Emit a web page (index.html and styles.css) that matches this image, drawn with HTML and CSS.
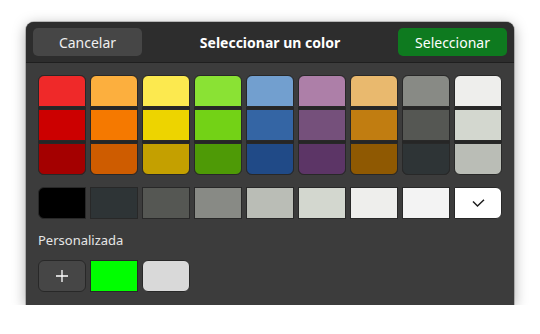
FILE: index.html
```html
<!DOCTYPE html>
<html lang="es">
<head>
<meta charset="utf-8">
<link rel="stylesheet" href="styles.css">
</head>
<body>
<div class="window">
  <header class="header">
    <button class="btn btn-cancel">Cancelar</button>
    <div class="title">Seleccionar un color</div>
    <button class="btn btn-ok">Seleccionar</button>
  </header>
  <main class="content">
    <div class="palette">
      <div class="col"><div class="sw" style="background:#ef2929"></div><div class="sw" style="background:#cc0000"></div><div class="sw" style="background:#a40000"></div></div>
      <div class="col"><div class="sw" style="background:#fcaf3e"></div><div class="sw" style="background:#f57900"></div><div class="sw" style="background:#ce5c00"></div></div>
      <div class="col"><div class="sw" style="background:#fce94f"></div><div class="sw" style="background:#edd400"></div><div class="sw" style="background:#c4a000"></div></div>
      <div class="col"><div class="sw" style="background:#8ae234"></div><div class="sw" style="background:#73d216"></div><div class="sw" style="background:#4e9a06"></div></div>
      <div class="col"><div class="sw" style="background:#729fcf"></div><div class="sw" style="background:#3465a4"></div><div class="sw" style="background:#204a87"></div></div>
      <div class="col"><div class="sw" style="background:#ad7fa8"></div><div class="sw" style="background:#75507b"></div><div class="sw" style="background:#5c3566"></div></div>
      <div class="col"><div class="sw" style="background:#e9b96e"></div><div class="sw" style="background:#c17d11"></div><div class="sw" style="background:#8f5902"></div></div>
      <div class="col"><div class="sw" style="background:#888a85"></div><div class="sw" style="background:#555753"></div><div class="sw" style="background:#2e3436"></div></div>
      <div class="col"><div class="sw" style="background:#eeeeec"></div><div class="sw" style="background:#d3d7cf"></div><div class="sw" style="background:#babdb6"></div></div>
    </div>
    <div class="grays">
      <div class="gsw" style="background:#000000"></div>
      <div class="gsw" style="background:#2e3436"></div>
      <div class="gsw" style="background:#555753"></div>
      <div class="gsw" style="background:#888a85"></div>
      <div class="gsw" style="background:#babdb6"></div>
      <div class="gsw" style="background:#d3d7cf"></div>
      <div class="gsw" style="background:#eeeeec"></div>
      <div class="gsw" style="background:#f3f3f3"></div>
      <div class="gsw selected" style="background:#ffffff">
        <svg width="13" height="9" viewBox="0 0 13 9"><path d="M1 2.5 L5.5 7 L12 0.8" fill="none" stroke="#1e1e1e" stroke-width="1.5"/></svg>
      </div>
    </div>
    <div class="label">Personalizada</div>
    <div class="custom">
      <div class="add">
        <svg width="12" height="12" viewBox="0 0 12 12"><path d="M6 0 V12 M0 6 H12" stroke="#ffffff" stroke-width="1.3"/></svg>
      </div>
      <div class="csw square" style="background:#00ff00"></div>
      <div class="csw rounded" style="background:#d9d9d9"></div>
    </div>
  </main>
</div>
</body>
</html>
```

FILE: styles.css
```css
html, body {
  margin: 0;
  padding: 0;
  background: #ffffff;
}
body {
  padding: 22px 26px 0 26px;
  font-family: "Noto Sans", "Open Sans", sans-serif;
}
.window {
  width: 488px;
  height: 283px;
  background: #3c3c3c;
  border-radius: 8px 8px 0 0;
  box-shadow: 0 3px 14px rgba(0,0,0,0.35), 0 0 0 1px rgba(0,0,0,0.2);
  display: flex;
  flex-direction: column;
  overflow: hidden;
}
.header {
  height: 41px;
  box-sizing: border-box;
  background: #2d2d2d;
  border-bottom: 1px solid #1f1f1f;
  display: flex;
  align-items: center;
  justify-content: space-between;
  padding: 0 7px;
}
.btn {
  width: 109px;
  height: 28px;
  border: none;
  border-radius: 5px;
  font-family: inherit;
  font-size: 14px;
  color: #f0f0f0;
  padding: 0;
}
.btn-cancel { background: #464646; }
.btn-ok { background: #0e7a1f; color: #ffffff; }
.title {
  color: #ffffff;
  font-weight: bold;
  font-size: 14px;
}
.content {
  padding: 12px 12px 12px 12px;
  display: flex;
  flex-direction: column;
}
.palette {
  display: grid;
  grid-template-columns: repeat(9, 48px);
  column-gap: 4px;
}
.col {
  display: flex;
  flex-direction: column;
  gap: 2px;
  background: #262626;
  border-radius: 6px;
}
.sw {
  height: 32px;
  box-sizing: border-box;
  border: 1px solid #282828;
}
.sw:first-child { border-radius: 6px 6px 0 0; }
.sw:last-child { border-radius: 0 0 6px 6px; }
.grays {
  margin-top: 12px;
  display: grid;
  grid-template-columns: repeat(9, 48px);
  column-gap: 4px;
}
.gsw {
  height: 32px;
  box-sizing: border-box;
  border: 1px solid #282828;
  display: flex;
  align-items: center;
  justify-content: center;
}
.gsw:first-child { border-radius: 6px 0 0 6px; }
.gsw:last-child { border-radius: 0 6px 6px 0; }
.label {
  margin-top: 12px;
  height: 19px;
  line-height: 19px;
  color: #e6e6e6;
  font-size: 13px;
}
.custom {
  margin-top: 10px;
  display: flex;
  gap: 4px;
}
.add, .csw {
  width: 48px;
  height: 32px;
  box-sizing: border-box;
  border: 1px solid #282828;
}
.add {
  background: #464646;
  border-radius: 6px;
  display: flex;
  align-items: center;
  justify-content: center;
}
.csw.rounded { border-radius: 6px; }
```
